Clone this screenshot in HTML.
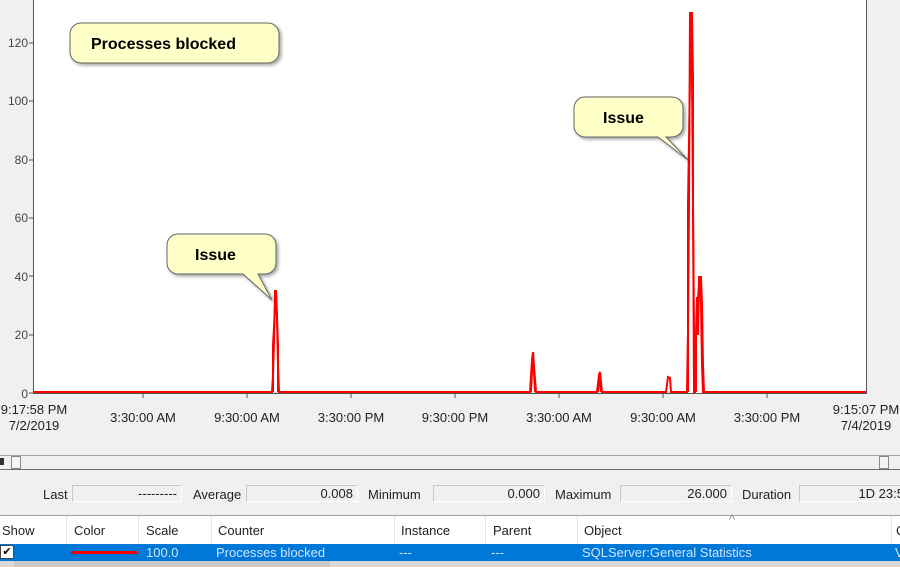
<!DOCTYPE html>
<html><head><meta charset="utf-8"><style>
body{margin:0;width:900px;height:567px;overflow:hidden;background:#f0f0f0;font-family:"Liberation Sans",sans-serif;position:relative}
.t{position:absolute;font-size:13px;color:#222;white-space:nowrap}
.box{position:absolute;height:17px;border:1px solid #c8c8c8;border-right-color:#fff;border-bottom-color:#fff;font-size:13px;text-align:right;padding-right:4px;line-height:16px;color:#222;box-sizing:border-box}
</style></head><body>
<svg width="900" height="480" style="position:absolute;left:0;top:0" font-family="Liberation Sans, sans-serif">
<defs><filter id="sh" x="-10%" y="-10%" width="130%" height="140%"><feDropShadow dx="2" dy="2" stdDeviation="1.5" flood-color="#000" flood-opacity="0.35"/></filter></defs>
<rect x="34" y="0" width="832" height="393" fill="#fff"/>
<line x1="33.5" y1="0" x2="33.5" y2="394" stroke="#555"/>
<line x1="866.5" y1="0" x2="866.5" y2="394" stroke="#555"/>
<line x1="33" y1="393.5" x2="867" y2="393.5" stroke="#555"/>
<g font-size="12" fill="#444" text-anchor="end">
<text x="28" y="47">120</text><text x="28" y="105">100</text><text x="28" y="164">80</text><text x="28" y="222">60</text><text x="28" y="281">40</text><text x="28" y="339">20</text><text x="28" y="398">0</text>
</g>
<g stroke="#555"><line x1="29" y1="43" x2="34" y2="43"/><line x1="29" y1="101" x2="34" y2="101"/><line x1="29" y1="160" x2="34" y2="160"/><line x1="29" y1="218" x2="34" y2="218"/><line x1="29" y1="276" x2="34" y2="276"/><line x1="29" y1="335" x2="34" y2="335"/><line x1="29" y1="393" x2="34" y2="393"/>
<line x1="143" y1="393" x2="143" y2="398"/><line x1="247" y1="393" x2="247" y2="398"/><line x1="351" y1="393" x2="351" y2="398"/><line x1="455" y1="393" x2="455" y2="398"/><line x1="559" y1="393" x2="559" y2="398"/><line x1="663" y1="393" x2="663" y2="398"/><line x1="767" y1="393" x2="767" y2="398"/></g>
<g fill="none" stroke="#f00" stroke-width="2">
<polyline points="34,392 272,392 273,375 274,342 275,291 276,291 277,317 278,366 279,392 530,392 532,360 533,352 534,366 536,392 597,392 599,375 600,372 602,392 666,392 668,377 670,378 671,392 687,392 688,330 689,204 690,13 692,13 692,77 693,204 694,392 695,392 696,335 697,297 698,335 699,277 700,277 701,305 702,365 703,392 866,392"/>
<polyline points="273,392 273,345 276,291 278,345 278,392"/>
<polyline points="688,392 688,204 690,78 690,13 692,13 693,78 693,204 694,330 694,392"/>
<polyline points="696,392 696,335 698,297 700,277 701,277 702,305 703,365 704,392"/>
<polyline points="531,392 533,352 535,392"/>
<polyline points="598,392 600,372 601,392"/>
</g>
<g filter="url(#sh)" stroke="#666" fill="#ffffc8">
<rect x="70" y="23" width="209" height="40" rx="11"/>
<path d="M178,234 H265 a11,11 0 0 1 11,11 V263 a11,11 0 0 1 -11,11 H258 L272,300 L243,274 H178 a11,11 0 0 1 -11,-11 V245 a11,11 0 0 1 11,-11 Z"/>
<path d="M585,97 H672 a11,11 0 0 1 11,11 V126 a11,11 0 0 1 -11,11 H666 L688,160 L658,137 H585 a11,11 0 0 1 -11,-11 V108 a11,11 0 0 1 11,-11 Z"/>
</g>
<g font-size="16" font-weight="bold" fill="#000">
<text x="91" y="49">Processes blocked</text><text x="195" y="260">Issue</text><text x="603" y="123">Issue</text>
</g>
<g font-size="13" fill="#222" text-anchor="middle">
<text x="34" y="414">9:17:58 PM</text><text x="34" y="430">7/2/2019</text>
<text x="143" y="422">3:30:00 AM</text><text x="247" y="422">9:30:00 AM</text><text x="351" y="422">3:30:00 PM</text><text x="455" y="422">9:30:00 PM</text><text x="559" y="422">3:30:00 AM</text><text x="663" y="422">9:30:00 AM</text><text x="767" y="422">3:30:00 PM</text>
<text x="866" y="414">9:15:07 PM</text><text x="866" y="430">7/4/2019</text>
</g>
<rect x="0" y="455" width="900" height="15" fill="#f0f0f0"/>
<line x1="0" y1="455.5" x2="900" y2="455.5" stroke="#a0a0a0"/>
<line x1="0" y1="469.5" x2="900" y2="469.5" stroke="#707070"/>
<rect x="11.5" y="456.5" width="9" height="12" fill="#f4f4f4" stroke="#888"/>
<rect x="879.5" y="456.5" width="9" height="12" fill="#f4f4f4" stroke="#888"/>
<rect x="0" y="458" width="4" height="7" fill="#333"/>
</svg>
<div class="t" style="left:43px;top:487px">Last</div><div class="box" style="left:72px;top:485px;width:110px">---------</div>
<div class="t" style="left:193px;top:487px">Average</div><div class="box" style="left:246px;top:485px;width:112px">0.008</div>
<div class="t" style="left:368px;top:487px">Minimum</div><div class="box" style="left:433px;top:485px;width:112px">0.000</div>
<div class="t" style="left:555px;top:487px">Maximum</div><div class="box" style="left:620px;top:485px;width:112px">26.000</div>
<div class="t" style="left:742px;top:487px">Duration</div><div class="box" style="left:799px;top:485px;width:110px">1D 23:5</div>
<div style="position:absolute;left:0;top:515px;width:900px;height:1px;background:#a0a0a0"></div>
<div style="position:absolute;left:0;top:516px;width:900px;height:28px;background:#fff"></div>
<div style="position:absolute;left:0;top:516px;width:900px;height:28px;font-size:13px;color:#222">
<span style="position:absolute;left:2px;top:7px">Show</span>
<span style="position:absolute;left:66px;top:0;width:1px;height:28px;background:#e5e5e5"></span>
<span style="position:absolute;left:74px;top:7px">Color</span>
<span style="position:absolute;left:138px;top:0;width:1px;height:28px;background:#e5e5e5"></span>
<span style="position:absolute;left:146px;top:7px">Scale</span>
<span style="position:absolute;left:211px;top:0;width:1px;height:28px;background:#e5e5e5"></span>
<span style="position:absolute;left:218px;top:7px">Counter</span>
<span style="position:absolute;left:394px;top:0;width:1px;height:28px;background:#e5e5e5"></span>
<span style="position:absolute;left:401px;top:7px">Instance</span>
<span style="position:absolute;left:485px;top:0;width:1px;height:28px;background:#e5e5e5"></span>
<span style="position:absolute;left:493px;top:7px">Parent</span>
<span style="position:absolute;left:577px;top:0;width:1px;height:28px;background:#e5e5e5"></span>
<span style="position:absolute;left:584px;top:7px">Object</span>
<span style="position:absolute;left:729px;top:-4px;color:#888">^</span>
<span style="position:absolute;left:891px;top:0;width:1px;height:28px;background:#e5e5e5"></span>
<span style="position:absolute;left:896px;top:7px">C</span>
</div>
<div style="position:absolute;left:0;top:544px;width:900px;height:17px;background:#0078d7;font-size:13px;color:#cfe4ff">
<span style="position:absolute;left:0;top:1px;width:14px;height:14px;background:#fff;border:1px solid #444;box-sizing:border-box;color:#000;font-size:11px;line-height:12px;text-align:center">✔</span>
<span style="position:absolute;left:71px;top:7px;width:66px;height:3px;background:#e00"></span>
<span style="position:absolute;left:146px;top:1px">100.0</span>
<span style="position:absolute;left:216px;top:1px">Processes blocked</span>
<span style="position:absolute;left:399px;top:1px">---</span>
<span style="position:absolute;left:491px;top:1px">---</span>
<span style="position:absolute;left:582px;top:1px">SQLServer:General Statistics</span>
<span style="position:absolute;left:895px;top:1px">V</span>
</div>
<div style="position:absolute;left:0;top:561px;width:900px;height:6px;background:#d8d8d8"></div>
<div style="position:absolute;left:14px;top:561px;width:316px;height:6px;background:#c8c8c8"></div>
</body></html>
